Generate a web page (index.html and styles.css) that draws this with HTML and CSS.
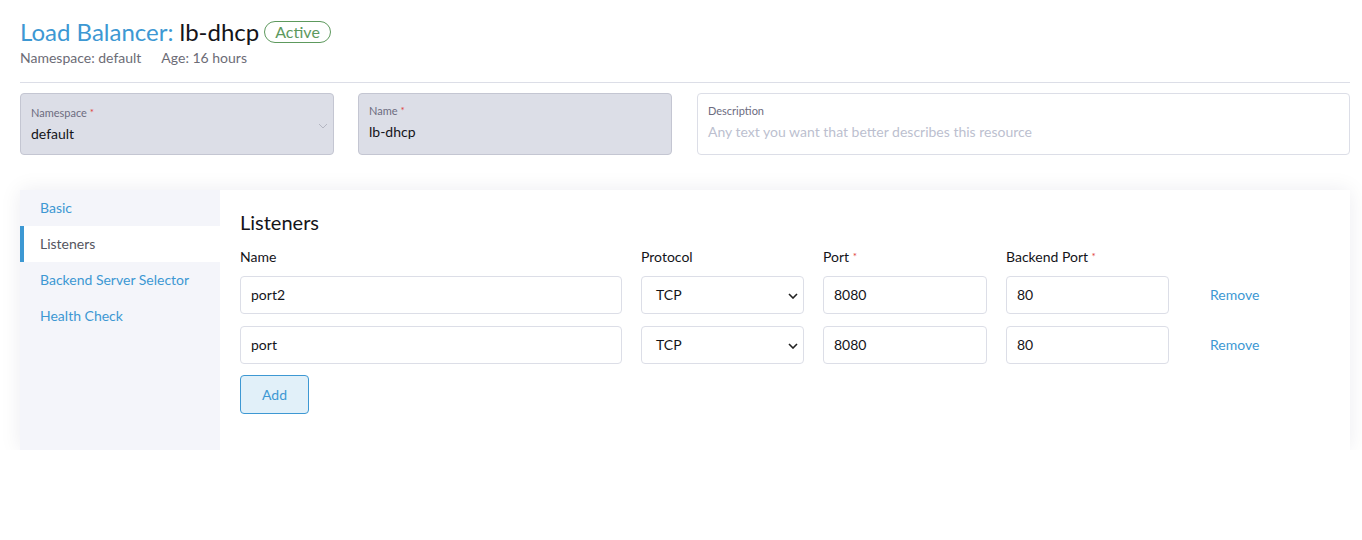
FILE: index.html
```html
<!DOCTYPE html>
<html>
<head>
<meta charset="utf-8">
<link rel="stylesheet" href="styles.css">
</head>
<body>
<div class="page">
  <header class="masthead">
    <h1 class="title"><span class="type">Load Balancer:</span> <span class="name">lb-dhcp</span> <span class="badge">Active</span></h1>
    <div class="subhead"><span>Namespace: default</span><span>Age: 16 hours</span></div>
  </header>
  <div class="rule"></div>
  <div class="meta-row">
    <div class="field disabled">
      <label class="field-label">Namespace <span class="req">*</span></label>
      <div class="field-value">default</div>
      <svg class="field-caret" width="10" height="6" viewBox="0 0 10 6"><path d="M1 1l4 4 4-4" fill="none" stroke="#b4b6c2" stroke-width="1"/></svg>
    </div>
    <div class="field disabled">
      <label class="field-label">Name <span class="req">*</span></label>
      <div class="field-value">lb-dhcp</div>
    </div>
    <div class="field">
      <label class="field-label">Description</label>
      <div class="field-value placeholder">Any text you want that better describes this resource</div>
    </div>
  </div>
  <div class="tabbed">
    <nav class="tabs">
      <div class="tab">Basic</div>
      <div class="tab active">Listeners</div>
      <div class="tab">Backend Server Selector</div>
      <div class="tab">Health Check</div>
    </nav>
    <section class="pane">
      <h2 class="pane-title">Listeners</h2>
      <div class="grid">
        <div class="col-label">Name</div>
        <div class="col-label">Protocol</div>
        <div class="col-label">Port <span class="req">*</span></div>
        <div class="col-label">Backend Port <span class="req">*</span></div>
        <div></div>

        <div class="input">port2</div>
        <div class="input select">TCP<svg class="chev" width="10" height="6" viewBox="0 0 10 6"><path d="M1 1l4 4 4-4" fill="none" stroke="#222" stroke-width="1.6"/></svg></div>
        <div class="input">8080</div>
        <div class="input">80</div>
        <div class="remove">Remove</div>

        <div class="input">port</div>
        <div class="input select">TCP<svg class="chev" width="10" height="6" viewBox="0 0 10 6"><path d="M1 1l4 4 4-4" fill="none" stroke="#222" stroke-width="1.6"/></svg></div>
        <div class="input">8080</div>
        <div class="input">80</div>
        <div class="remove">Remove</div>
      </div>
      <button class="btn-add">Add</button>
    </section>
  </div>
</div>
</body>
</html>
```

FILE: styles.css
```css
* { box-sizing: border-box; }
html, body { margin: 0; padding: 0; background: #fff; }
body { font-family: Lato, "Open Sans", "Liberation Sans", sans-serif; color: #141419; font-size: 14px; }
.page { padding: 0 12px 0 20px; }

.masthead { padding-top: 18px; }
.title { margin: 0; font-size: 24px; font-weight: 400; line-height: 28px; display: flex; align-items: center; }
.title .type { color: #3d98d3; }
.title .name { color: #141419; margin-left: 6px; }
.badge { margin-left: 5px; font-size: 16px; color: #5d995d; border: 1px solid #5d995d; border-radius: 12px; padding: 0 10px; line-height: 20px; height: 22px; }
.subhead { margin-top: 3px; font-size: 14px; color: #6c6c76; display: flex; gap: 20px; line-height: 18px; }

.rule { height: 1px; background: #dcdee7; margin-top: 15px; }

.meta-row { display: grid; grid-template-columns: 314px 314px 1fr; column-gap: 24px; margin-top: 10px; }
.meta-row .field:nth-child(3) { margin-left: 1px; }
.field { position: relative; height: 62px; border: 1px solid #dcdee7; border-radius: 4px; padding: 10px 10px 0 10px; background: #fff; }
.field.disabled { background: #dcdee7; border-color: #c4c6d2; }
.field-label { display: block; font-size: 11px; color: #6c6c80; line-height: 14px; }
.field-value { font-size: 14px; line-height: 20px; margin-top: 4px; color: #141419; }
.field-value.placeholder { color: #bcbfcf; }
.field:nth-child(1) .field-label { margin-top: 2px; }
.field:nth-child(1) .field-value { margin-top: 4px; }
.field-caret { position: absolute; right: 5px; top: 29px; }
.req { color: #e03e3e; font-size: 10px; vertical-align: top; position: relative; top: -1px; }

.tabbed { display: flex; margin-top: 35px; width: 1330px; background: #fff; box-shadow: 0 0 20px rgba(20, 20, 60, 0.08); }
.tabs { width: 200px; flex: none; background: #f4f5fa; padding-bottom: 12px; }
.tab { height: 36px; line-height: 36px; padding-left: 20px; color: #3d98d3; font-size: 14px; }
.tab.active { background: #fff; color: #555560; border-left: 4px solid #3d98d3; padding-left: 16px; }

.pane { flex: 1; padding: 20px 20px 36px 20px; }
.pane-title { margin: 0; font-size: 20px; font-weight: 400; line-height: 25px; }
.grid { display: grid; grid-template-columns: 382px 163px 164px 163px 1fr; column-gap: 19px; row-gap: 12px; margin-top: 12px; }
.col-label { font-size: 14px; line-height: 20px; margin-bottom: -3px; }
.input { height: 38px; border: 1px solid #dcdee7; border-radius: 4px; padding: 0 10px; line-height: 36px; font-size: 14px; position: relative; }
.input.select { padding-left: 14px; }
.chev { position: absolute; right: 5px; top: 16px; }
.remove { color: #3d98d3; line-height: 38px; padding-left: 22px; }

.btn-add { margin-top: 11px; width: 69px; height: 39px; background: #e1f0f9; border: 1px solid #3d98d3; border-radius: 4px; color: #3d98d3; font-family: inherit; font-size: 14px; padding: 0; }
```
